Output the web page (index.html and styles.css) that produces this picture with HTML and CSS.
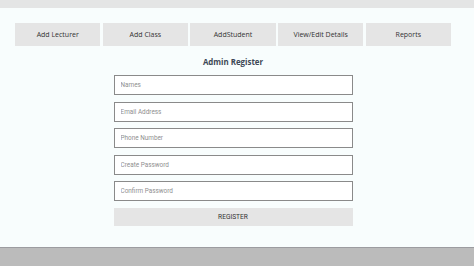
FILE: index.html
```html
<!DOCTYPE html>
<html>
<head>
<meta charset="utf-8">
<link rel="stylesheet" href="styles.css">
</head>
<body>
<div class="topbar"></div>
<main class="main">
  <nav class="nav">
    <button class="nav-btn">Add Lecturer</button>
    <button class="nav-btn">Add Class</button>
    <button class="nav-btn">AddStudent</button>
    <button class="nav-btn">View/Edit Details</button>
    <button class="nav-btn">Reports</button>
  </nav>
  <h2 class="title">Admin Register</h2>
  <form class="form">
    <input class="field" type="text" placeholder="Names">
    <input class="field" type="text" placeholder="Email Address">
    <input class="field" type="text" placeholder="Phone Number">
    <input class="field" type="password" placeholder="Create Password">
    <input class="field" type="password" placeholder="Confirm Password">
    <button class="submit" type="button">REGISTER</button>
  </form>
</main>
<footer class="footer"></footer>
</body>
</html>
```
FILE: styles.css
```css
html, body {
  margin: 0;
  padding: 0;
  height: 266px;
  overflow: hidden;
}
body {
  background: #f8fdfd;
  font-family: "Open Sans", "Noto Sans", sans-serif;
  display: flex;
  flex-direction: column;
}
.topbar {
  height: 8px;
  background: #e4e5e5;
  flex: none;
}
.main {
  flex: none;
  height: 239px;
  box-sizing: border-box;
  padding: 15px 23px 0 15px;
  display: flex;
  flex-direction: column;
}
.nav {
  display: flex;
  gap: 2.2px;
}
.nav-btn {
  flex: 1;
  height: 23px;
  border: none;
  background: #e5e5e5;
  font-family: "Open Sans", "Noto Sans", sans-serif;
  font-size: 7px;
  color: #333;
  padding: 0;
}
.title {
  margin: 10px 0 0 0;
  height: 12px;
  line-height: 12px;
  text-align: center;
  font-size: 7.9px;
  font-weight: 700;
  color: #3d4856;
}
.form {
  width: 239px;
  align-self: center;
  margin: 7px 0 0 0;
  display: flex;
  flex-direction: column;
  gap: 6.5px;
}
.field {
  height: 20px;
  box-sizing: border-box;
  margin: 0;
  border: 1.3px solid #8a8a8a;
  background: #fff;
  padding: 0 0 0 6px;
  font-family: "Roboto", "Liberation Sans", sans-serif;
  font-size: 6.4px;
  outline: none;
}
.field::placeholder {
  color: #8f8f8f;
}
.submit {
  margin-top: 0.5px;
  height: 18px;
  border: none;
  background: #e5e5e5;
  font-family: "Roboto", "Liberation Sans", sans-serif;
  font-size: 6.6px;
  color: #333;
  padding: 0;
}
.footer {
  flex: 1;
  background: #bbbbbb;
  border-top: 1.5px solid #9c9ca0;
}
```
